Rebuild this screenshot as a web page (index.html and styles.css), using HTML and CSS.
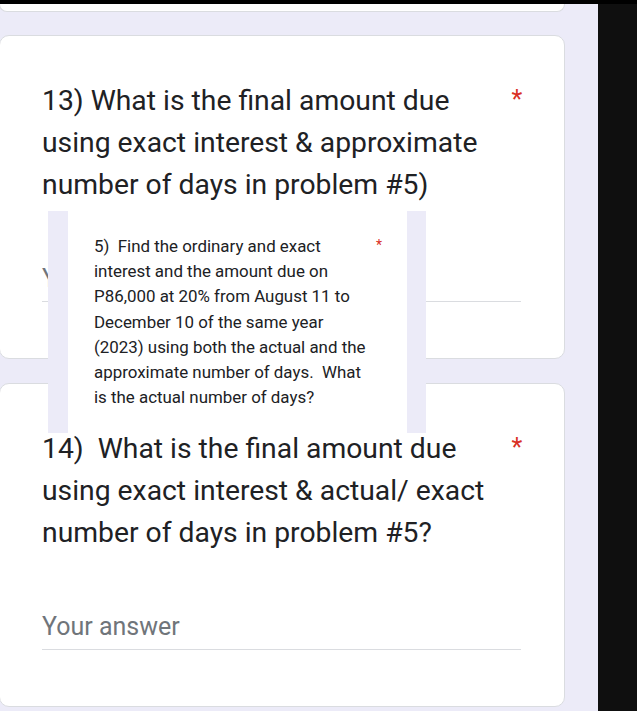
FILE: index.html
```html
<!DOCTYPE html>
<html>
<head>
<meta charset="utf-8">
<link rel="stylesheet" href="styles.css">
</head>
<body>
<div class="topbar"></div>
<div class="screen">
  <main class="form">
    <section class="card card-stub"></section>
    <section class="card">
      <div class="q-head">
        <div class="q-title">13) What is the final amount due using exact interest &amp; approximate number of days in problem #5)</div>
        <span class="req">*</span>
      </div>
      <div class="answer">Your answer</div>
    </section>
    <section class="card">
      <div class="q-head">
        <div class="q-title">14)&nbsp; What is the final amount due using exact interest &amp; actual/ exact number of days in problem #5?</div>
        <span class="req">*</span>
      </div>
      <div class="answer">Your answer</div>
    </section>
  </main>
  <aside class="side"></aside>
  <div class="popup">
    <div class="popup-body">
      <div class="popup-text">5)&nbsp; Find the ordinary and exact interest and the amount due on P86,000 at 20% from August 11 to December 10 of the same year (2023) using both the actual and the approximate number of days.&nbsp; What is the actual number of days?</div>
      <span class="popup-req">*</span>
    </div>
  </div>
</div>
</body>
</html>
```
FILE: styles.css
```css
html, body {
  margin: 0;
  padding: 0;
  background: #0f0f0f;
  font-family: Roboto, "Noto Sans", sans-serif;
  color: #202124;
}
.topbar {
  height: 4px;
  background: #000;
}
.screen {
  position: relative;
  display: flex;
  height: 707px;
  overflow: hidden;
}
.form {
  width: 598px;
  background: #ecebf8;
  display: flex;
  flex-direction: column;
  gap: 24px;
}
.side {
  flex: 1;
  background: #0f0f0f;
}
.card {
  box-sizing: border-box;
  width: 566px;
  margin-left: -1px;
  background: #fff;
  border: 1px solid #dadce0;
  border-radius: 10px;
  height: 324px;
  padding: 44px 43px 0 42px;
}
.card-stub {
  height: 8px;
  border-top: none;
  border-radius: 0 0 10px 10px;
  padding: 0;
  margin-bottom: -1px;
}
.q-head {
  display: flex;
  align-items: flex-start;
}
.q-title {
  flex: 1;
  font-size: 28.3px;
  line-height: 42px;
  padding-right: 8px;
}
.req {
  width: 14px;
  margin-right: -3px;
  color: #d93025;
  font-size: 25px;
  line-height: 40px;
  text-align: center;
}
.answer {
  margin-top: 59px;
  font-size: 25px;
  line-height: 28px;
  color: #70757a;
  padding-bottom: 8px;
  border-bottom: 1px solid #dadce0;
}
.popup {
  position: absolute;
  left: 48px;
  top: 207px;
  width: 378px;
  height: 222px;
  box-sizing: border-box;
  border-left: 20px solid #ecebf8;
  border-right: 19px solid #ecebf8;
  background: #fff;
}
.popup-body {
  display: flex;
  align-items: flex-start;
  padding: 23px 0 0 26px;
}
.popup-text {
  width: 276px;
  font-size: 16.9px;
  line-height: 25.2px;
}
.popup-req {
  margin-left: 6px;
  color: #d93025;
  font-size: 14px;
  line-height: 22px;
}
```
